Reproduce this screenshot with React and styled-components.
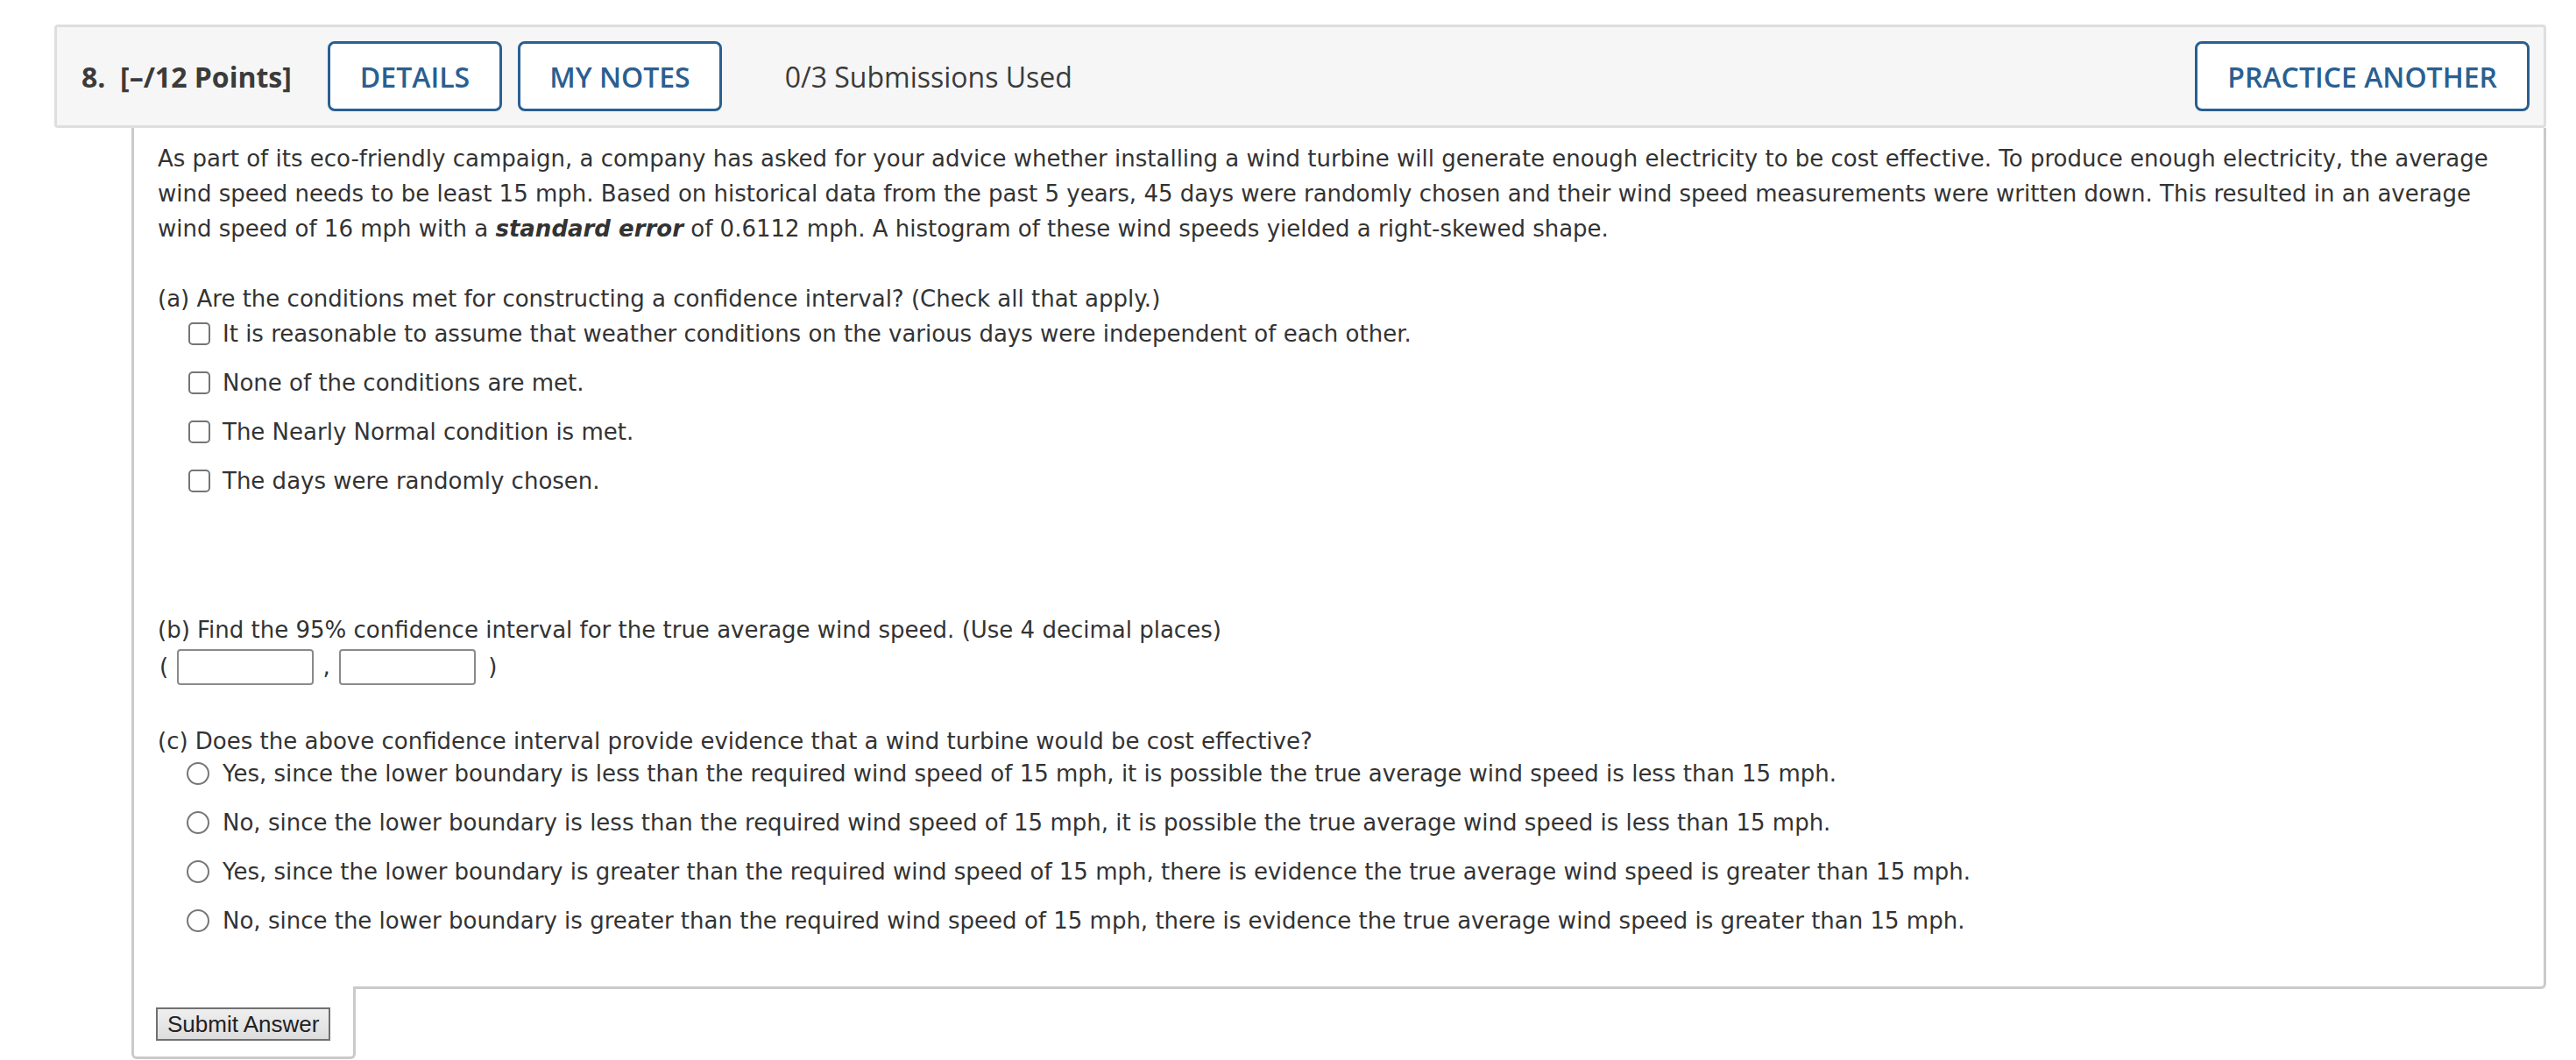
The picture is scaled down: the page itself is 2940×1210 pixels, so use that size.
import React from "react";
import styled, { createGlobalStyle } from "styled-components";

const GlobalStyle = createGlobalStyle`
  html, body {
    margin: 0;
    padding: 0;
    background: #ffffff;
  }
`;

const Page = styled.div`
  padding: 28px 34px 0 62px;
  width: 2940px;
  box-sizing: border-box;
`;

const Header = styled.div`
  display: flex;
  align-items: center;
  height: 118px;
  box-sizing: border-box;
  background: #f6f6f6;
  border: 3px solid #dedede;
  border-radius: 4px;
  padding: 0 16px 0 28px;
  font-family: "Open Sans", sans-serif;
  font-size: 32px;
  color: #3b3b3b;
`;

const Title = styled.div`
  font-weight: 700;
  white-space: pre;
  margin-right: 41px;
`;

const HeadButton = styled.button`
  height: 80px;
  box-sizing: border-box;
  padding: 0 ${({ $pad }) => $pad || 34}px;
  margin-right: ${({ $gap }) => $gap || 0}px;
  background: #ffffff;
  border: 3.5px solid #2a5f91;
  border-radius: 8px;
  color: #2a5f91;
  font-family: "Open Sans", sans-serif;
  font-size: 32px;
  font-weight: 600;
  cursor: pointer;
`;

const Submissions = styled.div`
  font-weight: 400;
`;

const Spacer = styled.div`
  flex: 1;
`;

const Body = styled.div`
  margin-left: 88px;
  border-left: 3px solid #cacaca;
  border-right: 3px solid #cacaca;
  border-bottom: 3px solid #cacaca;
  border-bottom-right-radius: 6px;
  padding: 15px 30px 55px 27px;
  font-family: "DejaVu Sans", Verdana, sans-serif;
  font-size: 26px;
  line-height: 40px;
  color: #333333;
`;

const Para = styled.p`
  margin: 0 0 ${({ $after }) => $after || 0}px 0;
`;

const Term = styled.strong`
  font-weight: 700;
  font-style: italic;
`;

const OptionList = styled.div`
  display: flex;
  flex-direction: column;
  gap: 16px;
  padding-left: ${({ $indent }) => $indent}px;
  margin-top: ${({ $before }) => $before || 0}px;
  margin-bottom: ${({ $after }) => $after || 0}px;
`;

const Option = styled.label`
  display: flex;
  align-items: center;
  height: 40px;
`;

const CheckBox = styled.span`
  width: 21px;
  height: 22px;
  border: 2px solid #757575;
  border-radius: 5px;
  margin-right: 14px;
  flex-shrink: 0;
`;

const Radio = styled.span`
  width: 22px;
  height: 22px;
  border: 2px solid #777777;
  border-radius: 50%;
  margin-right: 15px;
  flex-shrink: 0;
`;

const IntervalRow = styled.div`
  display: flex;
  align-items: center;
  height: 44px;
  margin-bottom: 43px;
`;

const Paren = styled.span`
  margin: 0 ${({ $right }) => $right || 0}px 0 ${({ $left }) => $left || 0}px;
`;

const AnswerBox = styled.input`
  width: 156px;
  height: 41px;
  box-sizing: border-box;
  border: 2px solid #8a8a8a;
  border-radius: 4px;
  background: #ffffff;
  margin: 0;
`;

const Comma = styled.span`
  display: inline-block;
  width: 29px;
  text-align: center;
`;

const Footer = styled.div`
  margin-left: 88px;
  margin-top: -3px;
  width: 256px;
  height: 83px;
  box-sizing: border-box;
  position: relative;
  background: #ffffff;
  border-left: 3px solid #cacaca;
  border-right: 3px solid #cacaca;
  border-bottom: 3px solid #cacaca;
  border-radius: 0 0 6px 6px;
  padding: 24px 0 0 25px;
`;

const SubmitButton = styled.button`
  height: 38px;
  padding: 0 11px;
  font-family: "Liberation Sans", Arial, sans-serif;
  font-size: 26px;
  color: #222222;
  background: linear-gradient(#efefef, #dddddd);
  border: 2px solid #707070;
  border-radius: 0;
  cursor: pointer;
`;

const conditions = [
  "It is reasonable to assume that weather conditions on the various days were independent of each other.",
  "None of the conditions are met.",
  "The Nearly Normal condition is met.",
  "The days were randomly chosen.",
];

const answers = [
  "Yes, since the lower boundary is less than the required wind speed of 15 mph, it is possible the true average wind speed is less than 15 mph.",
  "No, since the lower boundary is less than the required wind speed of 15 mph, it is possible the true average wind speed is less than 15 mph.",
  "Yes, since the lower boundary is greater than the required wind speed of 15 mph, there is evidence the true average wind speed is greater than 15 mph.",
  "No, since the lower boundary is greater than the required wind speed of 15 mph, there is evidence the true average wind speed is greater than 15 mph.",
];

const App = () => {
  return (
    <Page>
      <GlobalStyle />
      <Header>
        <Title>8.  [–/12 Points]</Title>
        <HeadButton $gap={18}>DETAILS</HeadButton>
        <HeadButton $gap={72} $pad={33}>MY NOTES</HeadButton>
        <Submissions>0/3 Submissions Used</Submissions>
        <Spacer />
        <HeadButton>PRACTICE ANOTHER</HeadButton>
      </Header>
      <Body>
        <Para $after={40}>
          As part of its eco-friendly campaign, a company has asked for your advice whether installing a wind
          turbine will generate enough electricity to be cost effective. To produce enough electricity, the average
          wind speed needs to be least 15 mph. Based on historical data from the past 5 years, 45 days were randomly
          chosen and their wind speed measurements were written down. This resulted in an average wind speed of 16
          mph with a <Term>standard error</Term> of 0.6112 mph. A histogram of these wind speeds yielded a
          right-skewed shape.
        </Para>
        <Para>(a) Are the conditions met for constructing a confidence interval? (Check all that apply.)</Para>
        <OptionList $indent={35} $after={130}>
          {conditions.map((text) => (
            <Option key={text}>
              <CheckBox />
              {text}
            </Option>
          ))}
        </OptionList>
        <Para>(b) Find the 95% confidence interval for the true average wind speed. (Use 4 decimal places)</Para>
        <IntervalRow>
          <Paren $left={2} $right={10}>(</Paren>
          <AnswerBox type="text" />
          <Comma>,</Comma>
          <AnswerBox type="text" />
          <Paren $left={14}>)</Paren>
        </IntervalRow>
        <Para>(c) Does the above confidence interval provide evidence that a wind turbine would be cost effective?</Para>
        <OptionList $indent={33} $before={-3}>
          {answers.map((text) => (
            <Option key={text}>
              <Radio />
              {text}
            </Option>
          ))}
        </OptionList>
      </Body>
      <Footer>
        <SubmitButton>Submit Answer</SubmitButton>
      </Footer>
    </Page>
  );
};

export default App;
